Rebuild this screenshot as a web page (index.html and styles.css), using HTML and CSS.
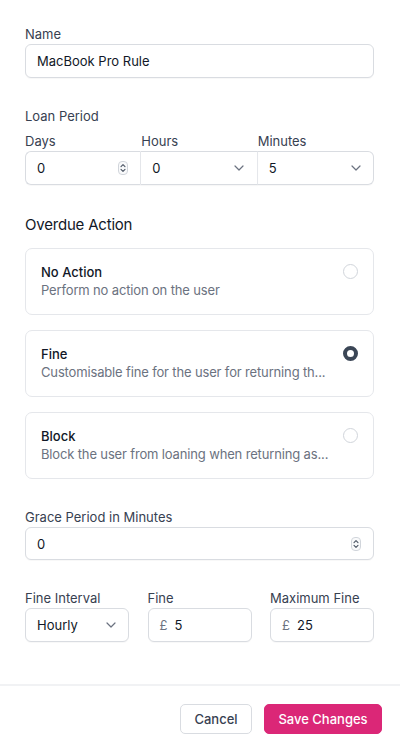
FILE: index.html
```html
<!DOCTYPE html>
<html lang="en">
<head>
<meta charset="utf-8">
<title>Edit Rule</title>
<link rel="stylesheet" href="styles.css">
</head>
<body>
<div class="page">
  <form class="form">
    <div class="field">
      <label class="label">Name</label>
      <div class="input"><span class="value">MacBook Pro Rule</span></div>
    </div>

    <div class="field section">
      <div class="label label-gap">Loan Period</div>
      <div class="group">
        <div class="group-col">
          <div class="label">Days</div>
          <div class="group-box first">
            <span class="value">0</span>
            <svg class="spin" width="10" height="14" viewBox="0 0 10 14"><rect x="0.5" y="0.5" width="9" height="13" rx="3.5" fill="#f9fafb" stroke="#d1d5db"/><path d="M3 5.6 L5 3.6 L7 5.6" fill="none" stroke="#4b5563" stroke-width="1.1" stroke-linecap="round" stroke-linejoin="round"/><path d="M3 8.4 L5 10.4 L7 8.4" fill="none" stroke="#4b5563" stroke-width="1.1" stroke-linecap="round" stroke-linejoin="round"/></svg>
          </div>
        </div>
        <div class="group-col">
          <div class="label">Hours</div>
          <div class="group-box mid">
            <span class="value">0</span>
            <svg class="chev" width="10" height="6" viewBox="0 0 10 6"><path d="M1 1 L5 5 L9 1" fill="none" stroke="#6b7280" stroke-width="1.2" stroke-linecap="round" stroke-linejoin="round"/></svg>
          </div>
        </div>
        <div class="group-col">
          <div class="label">Minutes</div>
          <div class="group-box last">
            <span class="value">5</span>
            <svg class="chev" width="10" height="6" viewBox="0 0 10 6"><path d="M1 1 L5 5 L9 1" fill="none" stroke="#6b7280" stroke-width="1.2" stroke-linecap="round" stroke-linejoin="round"/></svg>
          </div>
        </div>
      </div>
    </div>

    <div class="section overdue">
      <h2 class="heading">Overdue Action</h2>
      <div class="cards">
        <div class="card">
          <div class="card-text">
            <div class="card-title">No Action</div>
            <div class="card-desc">Perform no action on the user</div>
          </div>
          <span class="radio"></span>
        </div>
        <div class="card">
          <div class="card-text">
            <div class="card-title">Fine</div>
            <div class="card-desc">Customisable fine for the user for returning th...</div>
          </div>
          <span class="radio checked"></span>
        </div>
        <div class="card">
          <div class="card-text">
            <div class="card-title">Block</div>
            <div class="card-desc">Block the user from loaning when returning as...</div>
          </div>
          <span class="radio"></span>
        </div>
      </div>
    </div>

    <div class="field section">
      <label class="label">Grace Period in Minutes</label>
      <div class="input short">
        <span class="value">0</span>
        <svg class="spin" width="10" height="14" viewBox="0 0 10 14"><rect x="0.5" y="0.5" width="9" height="13" rx="3.5" fill="#f9fafb" stroke="#d1d5db"/><path d="M3 5.6 L5 3.6 L7 5.6" fill="none" stroke="#4b5563" stroke-width="1.1" stroke-linecap="round" stroke-linejoin="round"/><path d="M3 8.4 L5 10.4 L7 8.4" fill="none" stroke="#4b5563" stroke-width="1.1" stroke-linecap="round" stroke-linejoin="round"/></svg>
      </div>
    </div>

    <div class="trio section">
      <div class="field">
        <label class="label">Fine Interval</label>
        <div class="input">
          <span class="value">Hourly</span>
          <svg class="chev" width="10" height="6" viewBox="0 0 10 6"><path d="M1 1 L5 5 L9 1" fill="none" stroke="#6b7280" stroke-width="1.2" stroke-linecap="round" stroke-linejoin="round"/></svg>
        </div>
      </div>
      <div class="field">
        <label class="label">Fine</label>
        <div class="input money">
          <span class="currency">£</span><span class="value">5</span>
        </div>
      </div>
      <div class="field">
        <label class="label">Maximum Fine</label>
        <div class="input money">
          <span class="currency">£</span><span class="value">25</span>
        </div>
      </div>
    </div>
  </form>

  <div class="footer">
    <button type="button" class="btn btn-secondary">Cancel</button>
    <button type="button" class="btn btn-primary">Save Changes</button>
  </div>
</div>
</body>
</html>
```

FILE: styles.css
```css
* { box-sizing: border-box; }

html, body {
  margin: 0;
  padding: 0;
  background: #ffffff;
}

body {
  font-family: Inter, "Noto Sans", "Liberation Sans", sans-serif;
  color: #111827;
  width: 400px;
  height: 750px;
  overflow: hidden;
}

.page {
  display: flex;
  flex-direction: column;
}

.form {
  padding: 25px 26px 42px 25px;
  display: flex;
  flex-direction: column;
}

.section {
  margin-top: 29px;
}

.field {
  display: flex;
  flex-direction: column;
}

.label {
  display: block;
  font-size: 13px;
  line-height: 18px;
  color: #374151;
  margin-bottom: 1px;
}

.label-gap {
  margin-bottom: 7px;
}

.input {
  height: 34px;
  border: 1px solid #d9dce1;
  border-radius: 6px;
  display: flex;
  align-items: center;
  padding: 0 11px;
  background: #fff;
  box-shadow: 0 1px 1px rgba(0, 0, 0, 0.03);
}

.input.short {
  height: 33px;
}

.value {
  font-size: 13px;
  color: #111827;
  flex: 1;
  white-space: nowrap;
}

.spin {
  flex: none;
  margin-right: 1px;
}

.chev {
  flex: none;
  margin-right: 1px;
}

/* Loan period group */
.group {
  display: grid;
  grid-template-columns: 1fr 1fr 1fr;
}

.group-col {
  display: flex;
  flex-direction: column;
}

.group-box {
  height: 34px;
  border: 1px solid #d9dce1;
  display: flex;
  align-items: center;
  padding: 0 11px;
  box-shadow: 0 1px 1px rgba(0, 0, 0, 0.03);
}

.group-box.first {
  border-radius: 6px 0 0 6px;
  border-right: 1px solid #e5e7eb;
}

.group-box.mid {
  border-left: none;
  border-right: 1px solid #e5e7eb;
  padding-right: 12px;
}

.group-box.last {
  border-left: none;
  border-radius: 0 6px 6px 0;
}

/* Overdue action */
.overdue {
  margin-top: 30px;
}

.heading {
  margin: 0 0 13px;
  font-size: 15px;
  line-height: 20px;
  font-weight: 400;
  letter-spacing: -0.2px;
  color: #111827;
}

.cards {
  display: flex;
  flex-direction: column;
  gap: 15px;
}

.card {
  border: 1px solid #e5e7eb;
  border-radius: 7px;
  padding: 14px 15px 15px 15px;
  display: flex;
  align-items: flex-start;
  gap: 16px;
}

.card-text {
  flex: 1;
  min-width: 0;
}

.card-title {
  font-size: 13px;
  line-height: 18px;
  font-weight: 500;
  color: #111827;
}

.card-desc {
  font-size: 13px;
  line-height: 18px;
  color: #6b7280;
  letter-spacing: -0.15px;
  white-space: nowrap;
}

.radio {
  flex: none;
  width: 15px;
  height: 15px;
  border-radius: 50%;
  border: 1px solid #d1d5db;
  margin-top: 1px;
  background: #fff;
}

.radio.checked {
  border: 4.5px solid #3b4656;
  background: #fff;
}

/* Bottom trio */
.trio {
  display: grid;
  grid-template-columns: 104px 104px 104px;
  justify-content: space-between;
}

.money {
  padding-left: 11px;
}

.currency {
  font-size: 13px;
  color: #6b7280;
  margin-right: 7px;
}

/* Footer */
.footer {
  border-top: 2px solid #f1f2f4;
  display: flex;
  justify-content: flex-end;
  gap: 12px;
  padding: 18px 18px 0 0;
}

.btn {
  height: 30px;
  border-radius: 5px;
  font-family: Inter, "Noto Sans", "Liberation Sans", sans-serif;
  font-size: 13px;
  font-weight: 500;
  cursor: pointer;
}

.btn-secondary {
  background: #fff;
  border: 1px solid #d9dce1;
  color: #374151;
  width: 72px;
  padding: 0;
}

.btn-primary {
  background: #db2777;
  border: 1px solid #db2777;
  color: #fff;
  width: 118px;
  padding: 0;
}
```
